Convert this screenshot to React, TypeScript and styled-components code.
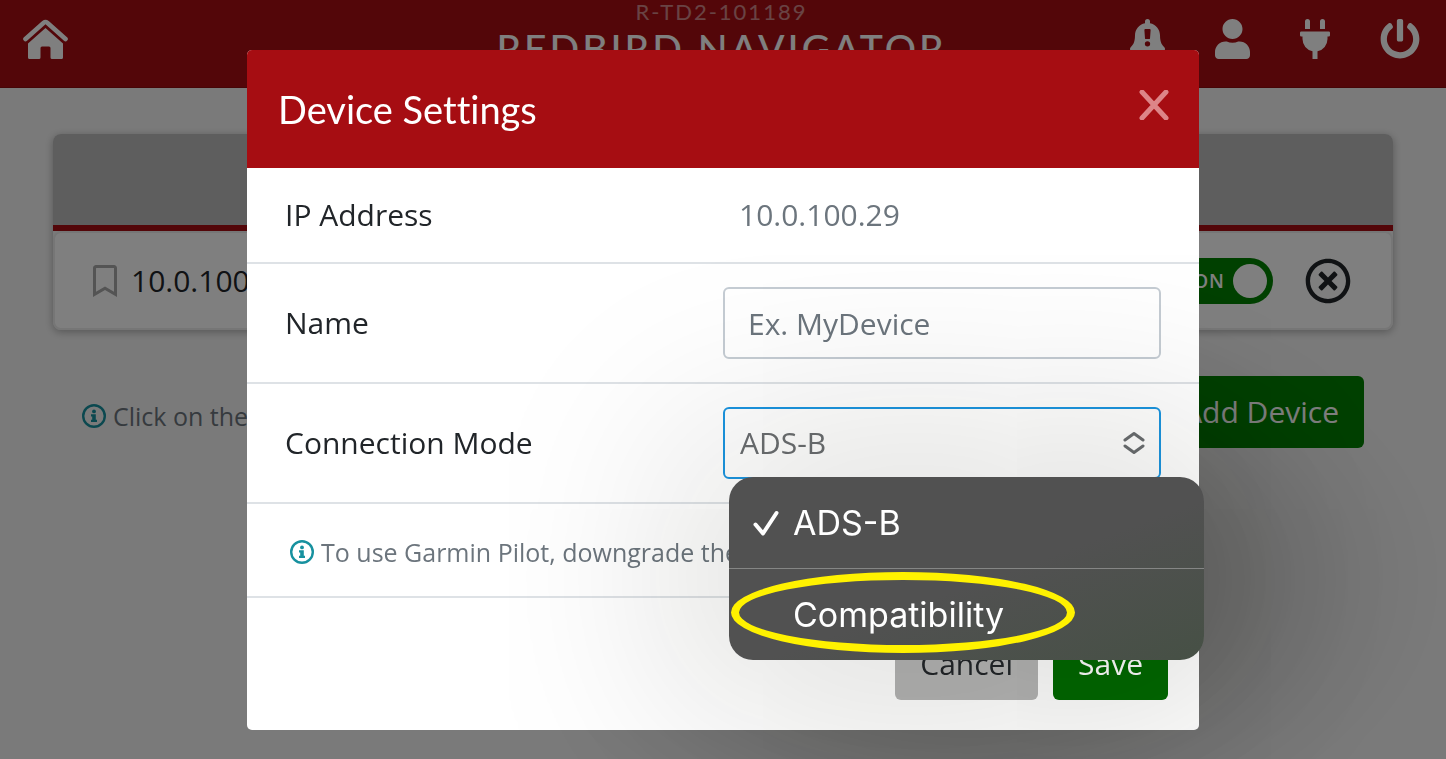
import React from "react";
import styled, { createGlobalStyle } from "styled-components";
import { FaUser, FaPlug, FaPowerOff, FaRegBookmark, FaRegTimesCircle } from "react-icons/fa";

const GlobalStyle = createGlobalStyle`
  * { box-sizing: border-box; }
  body {
    margin: 0;
    min-height: 100vh;
    background: #f5f5f5;
    color: #212529;
    font-family: "Open Sans", sans-serif;
    font-size: 30px;
    line-height: 40px;
    overflow: hidden;
  }
  button, input, select { font: inherit; }
  button { cursor: pointer; }
`;

const TopBar = styled.header`
  display: grid;
  grid-template-columns: 1fr auto 1fr;
  height: 88px;
  padding: 0 26px 0 23px;
  background: #a60d12;
  border-bottom: 1px solid #8c0b0f;
  color: #fff;
`;

const Nav = styled.nav<{ $end?: boolean }>`
  display: flex;
  justify-content: ${(p) => (p.$end ? "flex-end" : "flex-start")};
  gap: 50px;
  padding-top: 19px;
`;

const IconButton = styled.button<{ $width: number; $height?: number }>`
  display: block;
  flex: none;
  width: ${(p) => p.$width}px;
  height: ${(p) => p.$height || 40}px;
  padding: 0;
  border: 0;
  background: none;
  color: inherit;
  svg { display: block; width: 100%; height: 100%; }
`;

const Brand = styled.div`
  text-align: center;
  font-family: Lato, sans-serif;
`;

const Serial = styled.div`
  font-size: 22px;
  line-height: 24px;
  letter-spacing: 2px;
  opacity: 0.5;
`;

const Title = styled.h1`
  margin: 0;
  font-size: 39px;
  font-weight: 500;
  line-height: 48px;
  letter-spacing: 3px;
`;

const Main = styled.main`
  padding: 46px 53px;
`;

const DeviceTable = styled.section`
  border-radius: 8px;
  box-shadow: 0 2px 8px rgba(0, 0, 0, 0.3);
`;

const TableHead = styled.div`
  height: 97px;
  border-bottom: 6px solid #a60d12;
  border-radius: 8px 8px 0 0;
  background: #bcbcbc;
`;

const DeviceRow = styled.div`
  display: flex;
  align-items: center;
  justify-content: space-between;
  height: 99px;
  padding: 0 40px 0 38px;
  border: 2px solid #ececec;
  border-radius: 8px;
  background: #fff;
`;

const Group = styled.div<{ $gap: number }>`
  display: flex;
  align-items: center;
  gap: ${(p) => p.$gap}px;
`;

const BookmarkButton = styled(IconButton)`
  color: #a8a8a8;
`;

const RemoveButton = styled(IconButton)`
  color: #212529;
`;

const Toggle = styled.label`
  display: flex;
  align-items: center;
  justify-content: flex-end;
  gap: 8px;
  width: 98px;
  height: 46px;
  padding-right: 6px;
  border-radius: 23px;
  background: #008000;
  color: #fff;
  font-size: 19px;
  font-weight: 600;
  letter-spacing: 1px;
  input {
    appearance: none;
    width: 34px;
    height: 34px;
    margin: 0;
    border-radius: 50%;
    background: #fff;
  }
`;

const Below = styled.div`
  display: flex;
  justify-content: space-between;
  align-items: flex-start;
  padding: 46px 29px 0;
`;

const Hint = styled.p<{ $top?: number }>`
  display: flex;
  align-items: center;
  gap: 7px;
  margin: ${(p) => p.$top || 0}px 0 0;
  color: #6c757d;
  font-size: 25px;
  line-height: 32px;
  white-space: nowrap;
  svg { flex: none; color: #17919f; }
`;

const tones = {
  plain: "#b4b4b4",
  green: "#008000",
  pressed: "#006800",
};

const Button = styled.button<{ $tone: keyof typeof tones }>`
  height: 72px;
  padding: 0 25px;
  border: 0;
  border-radius: 6px;
  background: ${(p) => tones[p.$tone]};
  color: ${(p) => (p.$tone === "plain" ? "#212529" : "#fff")};
`;

const Backdrop = styled.div`
  position: fixed;
  inset: 0;
  padding: 50px 24px;
  background:
    radial-gradient(ellipse 480px 300px at calc(50% + 244px) 580px, rgba(0, 0, 0, 0.16) 45%, rgba(0, 0, 0, 0.12) 58%, rgba(0, 0, 0, 0.04) 80%, transparent 100%),
    rgba(0, 0, 0, 0.5);
`;

const Modal = styled.form`
  max-width: 952px;
  margin: 0 auto;
  border-radius: 5px;
  background: #fff;
`;

const ModalHeader = styled.div`
  display: flex;
  align-items: center;
  justify-content: space-between;
  height: 118px;
  padding: 0 30px 0 31px;
  border-radius: 5px 5px 0 0;
  background: #a60d12;
  color: #fff;
`;

const ModalTitle = styled.h2`
  margin: 0;
  font-family: Lato, sans-serif;
  font-size: 38px;
  font-weight: 400;
  font-variant-ligatures: none;
`;

const CloseButton = styled(IconButton)`
  margin-bottom: 8px;
  color: #dd8588;
`;

const Row = styled.div<{ $height: number }>`
  display: grid;
  grid-template-columns: 1fr 1fr;
  align-items: center;
  height: ${(p) => p.$height}px;
  border-bottom: 2px solid #dee2e6;
`;

const Label = styled.label`
  padding-left: 38px;
`;

const Value = styled.output`
  padding-left: 16px;
  color: #6c757d;
`;

const Field = styled.div`
  position: relative;
  display: flex;
  align-items: center;
  padding-right: 38px;
`;

const TextInput = styled.input`
  width: 100%;
  height: 72px;
  padding: 0 23px;
  border: 2px solid #c5ccd3;
  border-radius: 6px;
  background: transparent;
  &::placeholder { color: #6c757d; opacity: 1; }
`;

const Select = styled.select`
  appearance: none;
  width: 100%;
  height: 72px;
  padding: 0 15px;
  border: 2px solid #1b95e0;
  border-radius: 6px;
  background: transparent;
  color: #6a6d70;
`;

const Chevrons = styled.svg`
  position: absolute;
  right: 54px;
  pointer-events: none;
`;

const Menu = styled.ul`
  position: absolute;
  z-index: 2;
  top: 70px;
  left: 6px;
  width: 475px;
  margin: 0;
  padding: 0;
  list-style: none;
  border-radius: 24px;
  background: linear-gradient(160deg, #515151 55%, #465045 100%);
  box-shadow: 0 8px 210px 50px rgba(20, 20, 10, 0.15);
  li + li { position: relative; border-top: 1px solid #858685; }
`;

const MenuItem = styled.button`
  display: grid;
  grid-template-columns: 40px 1fr;
  align-items: center;
  width: 100%;
  height: 91px;
  padding: 0 24px;
  border: 0;
  background: none;
  color: #fff;
  font-family: Inter, sans-serif;
  font-size: 34px;
  text-align: left;
  span { grid-column: 2; }
`;

const Highlight = styled.div`
  position: absolute;
  top: 3px;
  left: 2px;
  width: 344px;
  height: 81px;
  border: 8px solid #fff200;
  border-radius: 50%;
  pointer-events: none;
`;

const NoteRow = styled.div`
  height: 94px;
  padding: 32px 43px 0;
  overflow: hidden;
  border-bottom: 2px solid #dee2e6;
`;

const Footer = styled.div`
  display: flex;
  justify-content: flex-end;
  gap: 15px;
  padding: 30px 31px;
`;

const HomeIcon = () => (
  <svg viewBox="0 0 45 40" fill="currentColor" aria-hidden="true">
    <path d="M2.500 20 20.700 3.700Q22.500 2.300 24.300 3.700L42.500 20" fill="none" stroke="currentColor" strokeWidth="4.600" strokeLinecap="round" />
    <path d="M22.500 9 40 24.400V38.500Q40 40 38.500 40H29Q27.500 40 27.500 38.500V29Q27.500 27.500 26 27.500H19Q17.500 27.500 17.500 29V38.500Q17.500 40 16 40H6.500Q5 40 5 38.500V24.400Z" />
  </svg>
);

const AlertIcon = () => (
  <svg viewBox="0 0 448 512" fill="currentColor" aria-hidden="true">
    <path fillRule="evenodd" d="M224 512c35.300 0 64-28.600 64-64H160c0 35.400 28.700 64 64 64zM439 362c-19-21-55-52-55-154 0-78-54-140-128-155V32a32 32 0 1 0-64 0v21C118 68 64 130 64 208c0 102-36 133-55 154-6 6-9 14-9 22 0 16 13 32 32 32h384c19 0 32-16 32-32 0-8-3-16-9-22zM196 128h56c7 0 12 5 12 12l-8 108c-1 5-5 8-10 8h-44c-5 0-9-3-10-8l-8-108c0-7 5-12 12-12zM224 284a34 34 0 1 1 0 68 34 34 0 0 1 0-68z" />
  </svg>
);

const InfoIcon = () => (
  <svg viewBox="0 0 24 24" width="24" height="24" aria-hidden="true">
    <circle cx="12" cy="12" r="10.800" fill="none" stroke="currentColor" strokeWidth="2.400" />
    <circle cx="12" cy="7.400" r="1.900" fill="currentColor" />
    <path d="M9 10.300h4.800v5.500H15v2.200H9v-2.200h1.200v-3.300H9z" fill="currentColor" />
  </svg>
);

export default function App() {
  return (
    <>
      <GlobalStyle />
      <TopBar>
        <Nav>
          <IconButton $width={45} aria-label="Home"><HomeIcon /></IconButton>
        </Nav>
        <Brand>
          <Serial>R-TD2-101189</Serial>
          <Title>REDBIRD NAVIGATOR</Title>
        </Brand>
        <Nav $end>
          <IconButton $width={35} aria-label="Alerts"><AlertIcon /></IconButton>
          <IconButton $width={35} aria-label="Account"><FaUser /></IconButton>
          <IconButton $width={30} aria-label="Connections"><FaPlug /></IconButton>
          <IconButton $width={40} aria-label="Power"><FaPowerOff /></IconButton>
        </Nav>
      </TopBar>
      <Main>
        <DeviceTable>
          <TableHead />
          <DeviceRow>
            <Group $gap={14}>
              <BookmarkButton $width={24} $height={32} aria-label="Bookmark"><FaRegBookmark /></BookmarkButton>
              <span>10.0.100.29</span>
            </Group>
            <Group $gap={32}>
              <Toggle>ON<input type="checkbox" defaultChecked /></Toggle>
              <RemoveButton $width={46} $height={46} aria-label="Remove"><FaRegTimesCircle /></RemoveButton>
            </Group>
          </DeviceRow>
        </DeviceTable>
        <Below>
          <Hint $top={24}><InfoIcon />Click on the</Hint>
          <Button $tone="green">Add Device</Button>
        </Below>
      </Main>
      <Backdrop>
        <Modal role="dialog" aria-labelledby="dialog-title" onSubmit={(e) => e.preventDefault()}>
          <ModalHeader>
            <ModalTitle id="dialog-title">Device Settings</ModalTitle>
            <CloseButton $width={30} $height={30} type="button" aria-label="Close">
              <svg viewBox="0 0 30 30" aria-hidden="true">
                <path d="M3 2 27 28M27 2 3 28" stroke="currentColor" strokeWidth="5" strokeLinecap="round" />
              </svg>
            </CloseButton>
          </ModalHeader>
          <Row $height={96}>
            <Label htmlFor="ip">IP Address</Label>
            <Value id="ip">10.0.100.29</Value>
          </Row>
          <Row $height={120}>
            <Label htmlFor="name">Name</Label>
            <Field>
              <TextInput id="name" placeholder="Ex. MyDevice" />
            </Field>
          </Row>
          <Row $height={120}>
            <Label htmlFor="mode">Connection Mode</Label>
            <Field>
              <Select id="mode" defaultValue="ADS-B">
                <option>ADS-B</option>
                <option>Compatibility</option>
              </Select>
              <Chevrons viewBox="0 0 22 24" width="22" height="24" fill="none" stroke="#6a6d70" strokeWidth="3" strokeLinecap="round" strokeLinejoin="round" aria-hidden="true">
                <path d="M2 9 11 2.500 20 9M2 15 11 21.500 20 15" />
              </Chevrons>
              <Menu>
                <li>
                  <MenuItem type="button">
                    <svg viewBox="0 0 26 26" width="26" height="26" fill="none" stroke="currentColor" strokeWidth="4" strokeLinecap="round" strokeLinejoin="round" aria-hidden="true">
                      <path d="M2.500 14.500 10 23.500 23.500 3" />
                    </svg>
                    <span>ADS-B</span>
                  </MenuItem>
                </li>
                <li>
                  <MenuItem type="button"><span>Compatibility</span></MenuItem>
                  <Highlight />
                </li>
              </Menu>
            </Field>
          </Row>
          <NoteRow>
            <Hint><InfoIcon />To use Garmin Pilot, downgrade the</Hint>
          </NoteRow>
          <Footer>
            <Button type="button" $tone="plain">Cancel</Button>
            <Button type="submit" $tone="pressed">Save</Button>
          </Footer>
        </Modal>
      </Backdrop>
    </>
  );
}
